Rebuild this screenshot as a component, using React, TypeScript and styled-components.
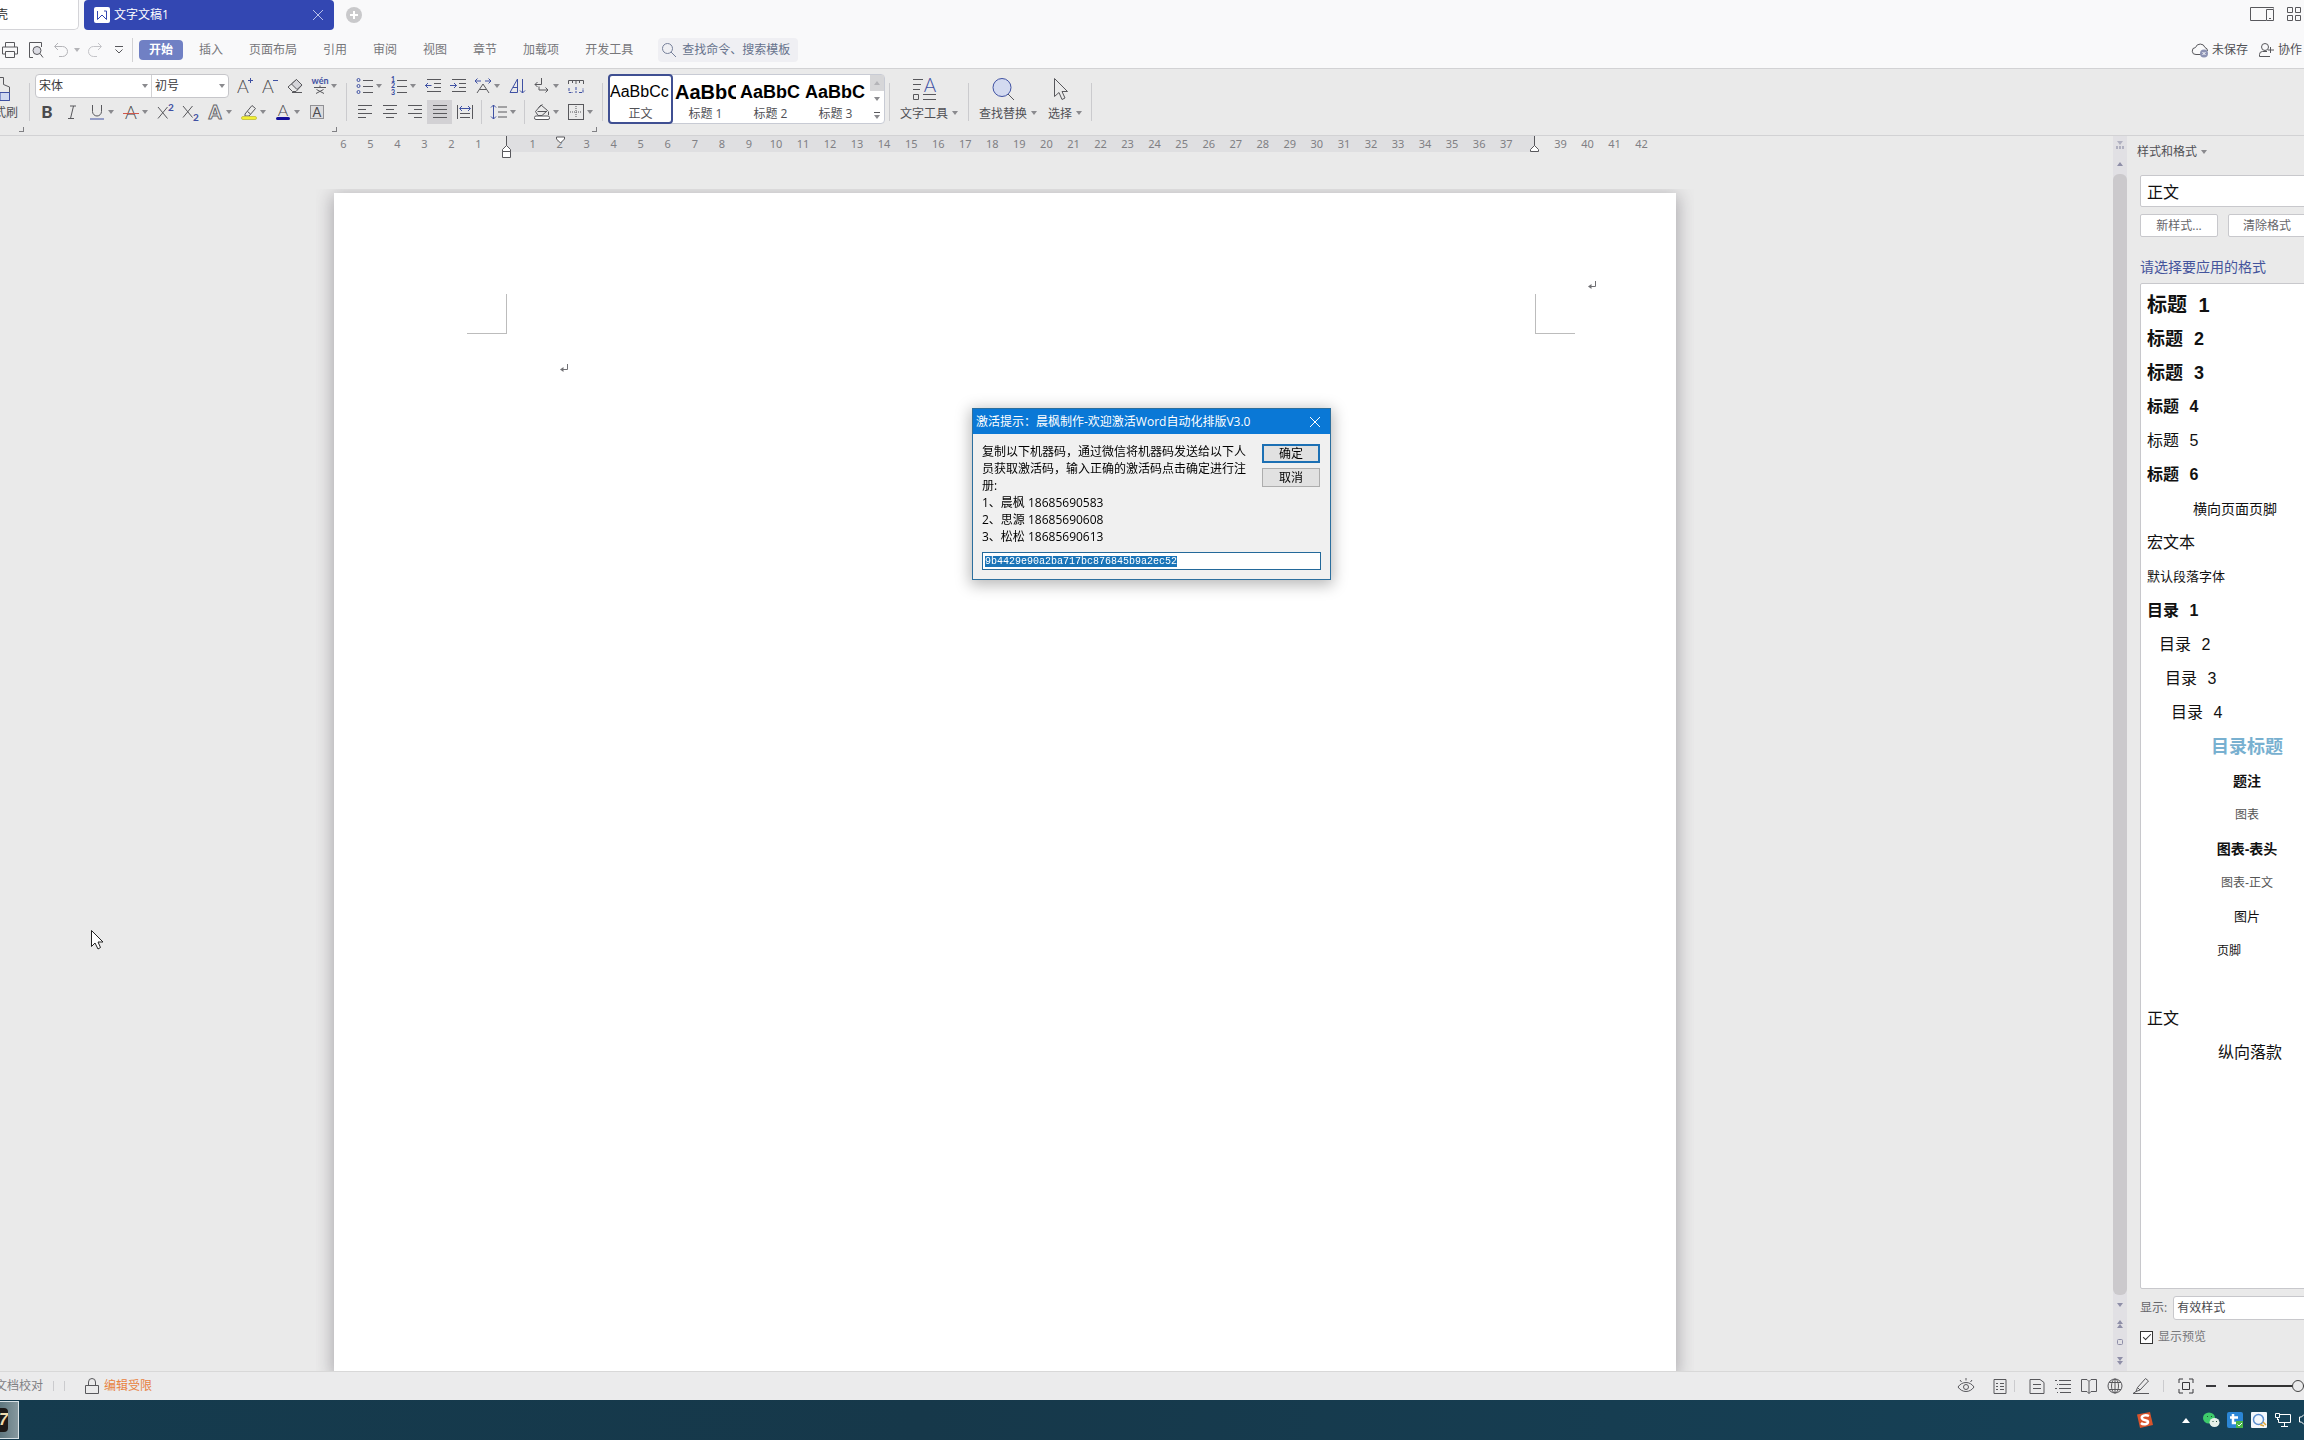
import React, { useEffect, useRef } from "react";
import styled, { createGlobalStyle, css } from "styled-components";

const ui = `"Open Sans", "Noto Sans CJK SC", sans-serif`;
const arial = `"Liberation Sans", "Noto Sans CJK SC", sans-serif`;

const c = {
  chrome: "#f9f9fa",
  surface: "#eaeaea",
  line: "#d2d2d4",
  ink: "#505055",
  muted: "#77777a",
  accent: "#3347b2",
  blue: "#3f51a3",
};

const Global = createGlobalStyle`
  *, *::before, *::after { box-sizing: border-box; }
  html, body { margin: 0; height: 100%; overflow: hidden; }
  #root { height: 100%; }
  body { font: 12px/16px ${ui}; color: ${c.ink}; background: ${c.surface}; }
  button, input, select { font: inherit; color: inherit; margin: 0; }
  button { border: 0; padding: 0; background: none; }
  svg { display: block; flex: none; }
`;

const Shell = styled.div`
  display: flex;
  flex-direction: column;
  height: 100vh;
  overflow: hidden;
  white-space: nowrap;
`;

/* ---------- icons ---------- */

const Svg = styled.svg.attrs<{ $w?: number; $h?: number }>((p) => ({
  width: p.$w ?? 16,
  height: p.$h ?? 16,
  viewBox: `0 0 ${p.$w ?? 16} ${p.$h ?? 16}`,
}))<{ $w?: number; $h?: number; $color?: string; $fill?: string }>`
  fill: ${(p) => p.$fill ?? "none"};
  stroke: ${(p) => p.$color ?? "#58585c"};
  stroke-width: 1;
  overflow: visible;
`;

const Glyph = styled.text<{ $size?: number; $color?: string; $weight?: number; $outline?: boolean }>`
  font-family: Lato, "Liberation Sans", sans-serif;
  font-size: ${(p) => p.$size ?? 17}px;
  font-weight: ${(p) => p.$weight ?? 300};
  fill: ${(p) => (p.$outline ? c.surface : p.$color ?? "#4a4a4e")};
  stroke: ${(p) => (p.$outline ? "#66666a" : "none")};
  text-anchor: middle;
`;

const Caret = ({ color = "#8a8a8e" }: { color?: string }) => (
  <Svg $w={6} $h={4} $fill={color} $color="none">
    <path d="M0 0h6L3 4z" />
  </Svg>
);

/* ---------- title strip ---------- */

const TitleStrip = styled.header`
  display: flex;
  align-items: flex-start;
  height: 31px;
  background: ${c.chrome};
`;

const HomeTab = styled.button`
  width: 79px;
  height: 30px;
  background: #fff;
  border: solid #d4d4d8;
  border-width: 0 1px 1px 0;
  border-radius: 0 0 5px 0;
  text-align: left;
  color: #333;
  overflow: hidden;
`;

const ClippedLabel = styled.span<{ $by: number }>`
  display: block;
  margin-left: -${(p) => p.$by}px;
`;

const DocTab = styled.div`
  display: flex;
  align-items: center;
  width: 250px;
  height: 30px;
  margin-left: 5px;
  padding: 0 11px 0 10px;
  gap: 4px;
  border-radius: 4px;
  background: ${c.accent};
  color: #fff;
`;

const TabName = styled.span`
  flex: 1;
`;

const AddTab = styled.button`
  display: flex;
  margin: 7px 0 0 12px;
`;

const WindowTools = styled.div`
  display: flex;
  gap: 13px;
  margin: 7px 3px 0 auto;
`;

/* ---------- menu bar ---------- */

const MenuBar = styled.nav`
  display: flex;
  align-items: center;
  height: 38px;
  background: ${c.chrome};
  border-bottom: 1px solid ${c.line};
`;

const QuickTools = styled.div`
  display: flex;
  align-items: center;
  width: 133px;
  height: 24px;
  padding-left: 2px;
  border-right: 1px solid ${c.line};
`;

const QuickButton = styled.button<{ $w: number }>`
  display: flex;
  align-items: center;
  gap: 5px;
  width: ${(p) => p.$w}px;
`;

const MenuItem = styled.button<{ $active?: boolean }>`
  height: 20px;
  padding: 0 13px;
  color: ${c.muted};
  ${(p) =>
    p.$active &&
    css`
      margin: 0 3px 0 6px;
      padding: 0 10px;
      border-radius: 4px;
      background: #7080c4;
      color: #fff;
      font-weight: 700;
    `}
`;

const SearchBox = styled.label`
  display: flex;
  align-items: center;
  gap: 6px;
  width: 140px;
  height: 24px;
  margin-left: 12px;
  padding-left: 4px;
  border-radius: 4px;
  background: #efeff3;
`;

const SearchInput = styled.input`
  width: 112px;
  padding: 0;
  border: 0;
  background: none;
  &::placeholder {
    color: #66728c;
    opacity: 1;
  }
`;

const MenuRight = styled.div`
  display: flex;
  gap: 11px;
  margin: 0 2px 0 auto;
`;

const MenuAction = styled.button`
  display: flex;
  align-items: center;
  gap: 4px;
`;

/* ---------- ribbon ---------- */

const Ribbon = styled.section`
  display: flex;
  height: 67px;
  background: ${c.surface};
  border-bottom: 1px solid ${c.line};
`;

const Divider = styled.span<{ $h?: number; $m?: number }>`
  flex: none;
  align-self: center;
  width: 1px;
  height: ${(p) => p.$h ?? 38}px;
  margin: 0 ${(p) => p.$m ?? 0}px;
  background: #cbcbce;
`;

const Group = styled.div<{ $w: number; $pad?: number }>`
  display: flex;
  flex-direction: column;
  width: ${(p) => p.$w}px;
  padding: 4px 0 3px ${(p) => p.$pad ?? 0}px;
`;

const ToolRow = styled.div`
  display: flex;
  align-items: center;
  height: 26px;
`;

const Tool = styled.button<{ $menu?: boolean; $on?: boolean }>`
  display: flex;
  align-items: center;
  flex: none;
  gap: 3px;
  width: ${(p) => (p.$menu ? 34 : 25)}px;
  height: 24px;
  padding-left: 5px;
  background: ${(p) => (p.$on ? "#d2d1d4" : "none")};
`;

const FontBoxes = styled.div`
  display: flex;
  flex: none;
  width: 194px;
  height: 24px;
  margin: 0 3px 0 1px;
  border: 1px solid #c6c6ca;
  border-radius: 4px;
  background: #fff;
`;

const BoxLabel = styled.label<{ $w: number }>`
  display: flex;
  align-items: center;
  width: ${(p) => p.$w}px;
  padding: 0 3px;
  & + & {
    border-left: 1px solid ${c.line};
  }
`;

const PlainSelect = styled.select`
  appearance: none;
  flex: 1;
  min-width: 0;
  padding: 0;
  border: 0;
  background: none;
  color: #3a3a3d;
`;

const Launcher = styled.button`
  align-self: flex-end;
  width: 5px;
  height: 5px;
  margin: 2px 5px 0 0;
  border: solid #808084;
  border-width: 0 1px 1px 0;
`;

const FormatPainter = styled.button`
  display: flex;
  flex-direction: column;
  gap: 4px;
  height: 52px;
  padding-top: 4px;
  text-align: left;
`;

const Gallery = styled.div`
  display: flex;
  align-self: flex-start;
  width: 277px;
  height: 50px;
  margin: 5px 0 0 5px;
  border: 1px solid #c8cbd4;
  border-radius: 4px;
  background: #fff;
`;

const StyleCard = styled.button<{ $on?: boolean }>`
  display: flex;
  flex-direction: column;
  justify-content: space-between;
  align-items: center;
  width: 65px;
  margin: -1px 0 -1px ${(p) => (p.$on ? -1 : 0)}px;
  padding: 5px 0 0;
  overflow: hidden;
  border: 2px solid ${(p) => (p.$on ? "#3f4f92" : "transparent")};
  border-radius: 4px;
`;

const Sample = styled.span<{ $size: number; $bold?: boolean }>`
  align-self: stretch;
  overflow: hidden;
  text-align: left;
  font-family: ${arial};
  font-size: ${(p) => p.$size}px;
  line-height: 22px;
  font-weight: ${(p) => (p.$bold ? 700 : 400)};
  color: #000;
`;

const GalleryScroll = styled.div`
  display: flex;
  flex-direction: column;
  margin-left: auto;
`;

const ScrollButton = styled.button<{ $off?: boolean }>`
  display: flex;
  flex-direction: column;
  align-items: center;
  justify-content: center;
  gap: 2px;
  width: 14px;
  height: 16px;
  background: ${(p) => (p.$off ? "#d6d6d8" : "none")};
`;

const BigTool = styled.button<{ $pad: number }>`
  display: flex;
  align-items: flex-end;
  gap: 4px;
  align-self: flex-start;
  height: 53px;
  padding: 0 ${(p) => p.$pad}px;
`;

const BigFace = styled.span`
  display: flex;
  flex-direction: column;
  align-items: center;
  gap: 6px;
`;

const CaretHolder = styled.span`
  padding-bottom: 7px;
`;

/* ---------- workspace ---------- */

const Body = styled.main`
  display: flex;
  flex: 1;
  min-height: 0;
`;

const Workspace = styled.section`
  display: flex;
  flex-direction: column;
  align-items: center;
  flex: 1;
  min-width: 0;
  padding-right: 103px;
`;

const Ruler = styled.div`
  display: flex;
  width: 1342px;
  height: 16px;
  line-height: 15px;
  font-size: 11px;
  font-family: "Noto Sans", sans-serif;
  color: #808084;
`;

const RulerPart = styled.div<{ $w: number; $band?: boolean; $end?: boolean }>`
  position: relative;
  display: flex;
  justify-content: ${(p) => (p.$end ? "flex-end" : "flex-start")};
  width: ${(p) => p.$w}px;
  padding: 0 15px 0 12px;
  background: ${(p) => (p.$band ? "#dfdfe1" : "none")};
`;

const Tick = styled.span<{ $grow?: boolean }>`
  flex: ${(p) => (p.$grow ? "1 1 0" : "0 0 27px")};
  min-width: 0;
  text-align: center;
`;

const Marker = styled.span<{ $x: string }>`
  position: absolute;
  top: 0;
  left: ${(p) => p.$x};
`;

const Page = styled.article`
  display: flex;
  flex-direction: column;
  flex: 1;
  width: 1342px;
  margin-top: 41px;
  padding-top: 88px;
  background: #fff;
  box-shadow: 0 4px 16px 2px rgba(80, 76, 84, 0.4);
  clip-path: inset(-4px -18px 0 -18px);
`;

const HeaderLine = styled.div`
  display: flex;
  justify-content: flex-end;
  padding-right: 80px;
`;

const Corners = styled.div`
  display: flex;
  justify-content: space-between;
  margin: 5px 101px 30px 133px;
`;

const Corner = styled.span<{ $right?: boolean }>`
  width: 40px;
  height: 40px;
  border: solid #bcbcbc;
  border-width: ${(p) => (p.$right ? "0 0 1px 1px" : "0 1px 1px 0")};
`;

const Paragraph = styled.div`
  padding-left: 226px;
`;

const ScrollTrack = styled.div`
  display: flex;
  flex-direction: column;
  align-items: center;
  width: 14px;
  background: #e1e0e4;
`;

const TrackButton = styled.button<{ $h: number }>`
  display: flex;
  align-items: center;
  justify-content: center;
  width: 14px;
  height: ${(p) => p.$h}px;
`;

const Thumb = styled.div`
  flex: 1;
  width: 14px;
  border-radius: 6px;
  background: #cbc9cc;
`;

/* ---------- style pane ---------- */

const Pane = styled.aside`
  width: 177px;
  overflow: hidden;
`;

const PaneInner = styled.div`
  display: flex;
  flex-direction: column;
  width: 227px;
  height: 100%;
  padding: 8px 0 26px 13px;
`;

const PaneTitle = styled.button`
  display: flex;
  align-items: center;
  gap: 4px;
  height: 16px;
  margin-left: -3px;
`;

const CurrentStyle = styled.input`
  width: 100%;
  height: 32px;
  margin-top: 15px;
  padding: 0 6px;
  border: 1px solid #c8c8cc;
  border-radius: 2px;
  background: #fff;
  color: #111;
  font-size: 16px;
`;

const PaneButtons = styled.div`
  display: flex;
  gap: 10px;
  margin-top: 7px;
`;

const PaneButton = styled.button`
  width: 78px;
  height: 23px;
  border: 1px solid #c8c8cc;
  border-radius: 2px;
  background: #fff;
  color: #66666a;
`;

const Prompt = styled.p`
  margin: 20px 0 6px;
  font-size: 14px;
  line-height: 20px;
  color: #44549c;
`;

const StyleList = styled.ul`
  flex: 1;
  min-height: 0;
  margin: 0;
  padding: 4px 6px;
  list-style: none;
  border: 1px solid #c8c8cc;
  border-radius: 2px;
  background: #fff;
`;

const StyleRow = styled.li<{ $size: number; $bold?: boolean; $color?: string; $indent?: number; $center?: boolean }>`
  height: 34px;
  line-height: 34px;
  padding-left: ${(p) => p.$indent ?? 0}px;
  text-align: ${(p) => (p.$center ? "center" : "left")};
  font-family: ${arial};
  font-size: ${(p) => p.$size}px;
  font-weight: ${(p) => (p.$bold ? 700 : 400)};
  color: ${(p) => p.$color ?? "#111"};
`;

const Level = styled.span`
  margin-left: 6px;
`;

const ShowRow = styled.div`
  display: flex;
  align-items: center;
  gap: 6px;
  margin-top: 7px;
  color: #66666a;
`;

const ShowSelect = styled.select`
  appearance: none;
  flex: 1;
  height: 24px;
  padding: 0 3px;
  border: 1px solid #c8c8cc;
  border-radius: 3px;
  background: #fff;
  color: #4a4a4e;
`;

const PreviewRow = styled.label`
  display: flex;
  align-items: center;
  gap: 5px;
  margin-top: 9px;
  color: #77777a;
`;

const Check = styled.input`
  appearance: none;
  display: grid;
  place-items: center;
  width: 13px;
  height: 13px;
  border: 1px solid #333;
  background: #fff;
  &:checked::before {
    content: "";
    width: 8px;
    height: 4px;
    margin-bottom: 3px;
    border: solid #333;
    border-width: 0 0 1px 1px;
    transform: rotate(-45deg);
  }
`;

/* ---------- status bar and taskbar ---------- */

const StatusBar = styled.footer`
  display: flex;
  align-items: center;
  height: 29px;
  border-top: 1px solid #d8d8d8;
  background: #ebebec;
  color: #808084;
`;

const Proofing = styled.button`
  margin: 0 10px 0 -5px;
`;

const Restricted = styled.button`
  display: flex;
  align-items: center;
  gap: 5px;
  margin-left: 10px;
  color: #e8823f;
`;

const ViewTools = styled.div`
  display: flex;
  align-items: center;
  gap: 10px;
  margin-left: auto;
`;

const IconButton = styled.button`
  display: flex;
`;

const ToolCluster = styled.span<{ $gap: number; $left?: number }>`
  display: flex;
  align-items: center;
  gap: ${(p) => p.$gap}px;
  padding-left: ${(p) => p.$left ?? 0}px;
`;

const ZoomSlider = styled.input`
  appearance: none;
  width: 76px;
  height: 14px;
  margin: 0;
  background: linear-gradient(#333, #333) center / 100% 2px no-repeat;
  &::-webkit-slider-thumb {
    appearance: none;
    width: 12px;
    height: 12px;
    border: 1px solid #444;
    border-radius: 50%;
    background: #ebebec;
  }
`;

const Taskbar = styled.footer`
  display: flex;
  align-items: center;
  height: 40px;
  background: linear-gradient(90deg, #153b4e, #16384a 40%, #164258);
`;

const TaskButton = styled.button`
  display: flex;
  align-items: center;
  width: 19px;
  height: 38px;
  border: 1px solid #d8e2e6;
  border-left: 0;
  background: linear-gradient(90deg, #5e777f, #86989e);
`;

const TaskIcon = styled.span`
  width: 8px;
  height: 24px;
  border-radius: 0 4px 4px 0;
  background: #1d1a18;
  color: #f0dcae;
  font: italic 700 16px/24px ${arial};
  direction: rtl;
  overflow: hidden;
`;

const Tray = styled.div`
  display: flex;
  align-items: center;
  gap: 8px;
  margin-left: auto;
`;

/* ---------- dialog ---------- */

const DialogLayer = styled.div`
  position: fixed;
  inset: 0;
  display: grid;
  justify-content: center;
  align-content: start;
  padding: 408px 1px 0 0;
`;

const DialogBox = styled.form`
  width: 359px;
  border: 1px solid #2c6f9e;
  background: #f0f0f0;
  box-shadow: 0 3px 14px 2px rgba(0, 0, 0, 0.28);
  color: #000;
`;

const DialogTitle = styled.div`
  display: flex;
  align-items: center;
  justify-content: space-between;
  height: 25px;
  padding: 0 10px 0 3px;
  background: #0a78d6;
  color: #fff;
`;

const DialogMain = styled.div`
  display: flex;
  justify-content: space-between;
  padding: 9px 10px 0 9px;
`;

const Message = styled.label`
  width: 266px;
  line-height: 17px;
  white-space: pre-line;
`;

const DialogButtons = styled.div`
  display: flex;
  flex-direction: column;
  gap: 5px;
  padding-top: 1px;
`;

const DialogButton = styled.button<{ $primary?: boolean }>`
  width: 58px;
  height: 19px;
  line-height: 14px;
  border: ${(p) => (p.$primary ? "2px solid #1c70b4" : "1px solid #adadad")};
  background: #e1e1e1;
`;

const CodeInput = styled.input`
  display: block;
  width: 339px;
  height: 18px;
  margin: 7px 0 9px 9px;
  padding: 0 2px;
  border: 1px solid #24699a;
  outline: 0;
  background: #fff;
  color: #000;
  font: 10px/14px "Liberation Mono", monospace;
  &::selection {
    background: #1a74b8;
    color: #fff;
  }
`;

const Pointer = styled.span`
  position: absolute;
  left: 91px;
  top: 930px;
`;

/* ---------- data ---------- */

const menus = ["插入", "页面布局", "引用", "审阅", "视图", "章节", "加载项", "开发工具"];

const cards = [
  { name: "正文", text: "AaBbCc", size: 16, bold: false },
  { name: "标题 1", text: "AaBbC", size: 20, bold: true },
  { name: "标题 2", text: "AaBbC", size: 18, bold: true },
  { name: "标题 3", text: "AaBbC", size: 18, bold: true },
];

type Entry = { name: string; level?: string; size: number; bold?: boolean; color?: string; indent?: number; center?: boolean };

const styleEntries: Entry[] = [
  { name: "标题", level: "1", size: 20, bold: true },
  { name: "标题", level: "2", size: 18, bold: true },
  { name: "标题", level: "3", size: 18, bold: true },
  { name: "标题", level: "4", size: 16, bold: true },
  { name: "标题", level: "5", size: 16 },
  { name: "标题", level: "6", size: 16, bold: true },
  { name: "横向页面页脚", size: 14, indent: 46 },
  { name: "宏文本", size: 16 },
  { name: "默认段落字体", size: 13 },
  { name: "目录", level: "1", size: 16, bold: true },
  { name: "目录", level: "2", size: 16, indent: 12 },
  { name: "目录", level: "3", size: 16, indent: 18 },
  { name: "目录", level: "4", size: 16, indent: 24 },
  { name: "目录标题", size: 18, bold: true, color: "#78b0d0", center: true },
  { name: "题注", size: 14, bold: true, center: true },
  { name: "图表", size: 12, color: "#555", center: true },
  { name: "图表-表头", size: 14, bold: true, center: true },
  { name: "图表-正文", size: 12, color: "#555", center: true },
  { name: "图片", size: 13, center: true },
  { name: "页脚", size: 12, indent: 70 },
  { name: "", size: 12 },
  { name: "正文", size: 16 },
  { name: "纵向落款", size: 16, indent: 71 },
];

const range = (from: number, to: number) => Array.from({ length: to - from + 1 }, (_, i) => from + i);

/* ---------- small drawings ---------- */

const ReturnMark = () => (
  <Svg $w={8} $h={8} $color="#707074">
    <path d="M7.500 0v5.500H2" />
    <path d="M3.500 3 0 5.500 3.500 8z" fill="#707074" stroke="none" />
  </Svg>
);

const AlignIcon = ({ mode }: { mode: "l" | "c" | "r" | "j" }) => {
  const full = "M1 1.500h14M1 9.500h14";
  const short = { l: "M1 5.500h8M1 13.500h8", c: "M4 5.500h8M4 13.500h8", r: "M7 5.500h8M7 13.500h8", j: "M1 5.500h14M1 13.500h14" }[mode];
  return (
    <Svg>
      <path d={full + short} />
    </Svg>
  );
};

const FontTools = () => (
  <Group $w={312} $pad={4}>
    <ToolRow>
      <FontBoxes>
        <BoxLabel $w={115}>
          <PlainSelect aria-label="字体" defaultValue="宋体"><option>宋体</option></PlainSelect>
          <Caret />
        </BoxLabel>
        <BoxLabel $w={77}>
          <PlainSelect aria-label="字号" defaultValue="初号"><option>初号</option></PlainSelect>
          <Caret />
        </BoxLabel>
      </FontBoxes>
      <Tool aria-label="增大字号">
        <Svg><Glyph x="6" y="15" $size={18}>A</Glyph><path d="M11 2.500h5M13.500 0v5" stroke={c.blue} /></Svg>
      </Tool>
      <Tool aria-label="减小字号">
        <Svg><Glyph x="6" y="15" $size={18}>A</Glyph><path d="M11 2.500h5" stroke={c.blue} /></Svg>
      </Tool>
      <Tool aria-label="清除格式">
        <Svg><path d="M9.500 1.500 15 7l-6 6.500H5.500L1 9z" /><path d="M4.500 6 10 11.500 15 7 9.500 1.500z" fill="#d5d5d9" /><path d="M5 14.500h10" /></Svg>
      </Tool>
      <Tool aria-label="拼音指南" $menu>
        <Svg>
          <Glyph x="8" y="6" $size={9} $weight={700} $color={c.blue}>wén</Glyph>
          <path d="M2 9.500h12M8 7.500v2M4.500 11.500 12 15.500M11.500 11.500 4 15.500" />
        </Svg>
        <Caret />
      </Tool>
    </ToolRow>
    <ToolRow>
      <Tool aria-label="加粗"><Svg><Glyph x="8" y="14" $size={17} $weight={900}>B</Glyph></Svg></Tool>
      <Tool aria-label="倾斜"><Svg><path d="M6 2h6M4 14.500h6M9.500 2 6.500 14.500" /></Svg></Tool>
      <Tool aria-label="下划线" $menu>
        <Svg><path d="M3.500 1v6.500a4.500 4.500 0 0 0 9 0V1" /><path d="M1 15h14" stroke={c.blue} /></Svg><Caret />
      </Tool>
      <Tool aria-label="删除线" $menu>
        <Svg><Glyph x="8" y="15" $size={18}>A</Glyph><path d="M0 9.500h16" stroke="#d0584c" /></Svg><Caret />
      </Tool>
      <Tool aria-label="上标">
        <Svg><path d="M1 3 10.500 14.500M10.500 3 1 14.500" /><Glyph x="14" y="7" $size={10} $weight={700} $color={c.blue}>2</Glyph></Svg>
      </Tool>
      <Tool aria-label="下标">
        <Svg><path d="M1 2 10.500 13.500M10.500 2 1 13.500" /><Glyph x="14" y="17" $size={10} $weight={700} $color={c.blue}>2</Glyph></Svg>
      </Tool>
      <Tool aria-label="文字效果" $menu>
        <Svg><Glyph x="8" y="15" $size={18} $weight={900} $outline>A</Glyph></Svg><Caret />
      </Tool>
      <Tool aria-label="突出显示" $menu>
        <Svg><path d="M4 10 11 1.500l3.500 3L8 12H4zM6.500 7.500 9.500 10" /><rect x="0.500" y="12.500" width="15" height="3" rx="1.500" fill="#f3f032" stroke="#c9c64a" /></Svg><Caret />
      </Tool>
      <Tool aria-label="字体颜色" $menu>
        <Svg><Glyph x="8" y="12" $size={16}>A</Glyph><rect x="1" y="13" width="14" height="3" rx="1.500" fill="#13109a" stroke="none" /></Svg><Caret />
      </Tool>
      <Tool aria-label="字符底纹">
        <Svg><rect x="1.500" y="1.500" width="13" height="13" fill="#dcdcde" stroke="#909094" /><Glyph x="8" y="13" $size={13} $weight={400}>A</Glyph></Svg>
      </Tool>
    </ToolRow>
    <Launcher aria-label="字体设置" />
  </Group>
);

const ParagraphTools = () => (
  <Group $w={251} $pad={1}>
    <ToolRow>
      <Tool aria-label="项目符号" $menu>
        <Svg><path d="M6 2.500h10M6 8.500h10M6 14.500h10" /><g stroke={c.blue}><circle cx="1.500" cy="2" r="1.500" /><circle cx="1.500" cy="8" r="1.500" /><circle cx="1.500" cy="14" r="1.500" /></g></Svg><Caret />
      </Tool>
      <Tool aria-label="编号" $menu>
        <Svg>
          <path d="M6 2.500h10M6 8.500h10M6 14.500h10" />
          <Glyph x="2" y="4" $size={7} $weight={900} $color={c.blue}>1</Glyph>
          <Glyph x="2" y="10" $size={7} $weight={900} $color={c.blue}>2</Glyph>
          <Glyph x="2" y="17" $size={7} $weight={900} $color={c.blue}>3</Glyph>
        </Svg><Caret />
      </Tool>
      <Tool aria-label="减少缩进"><Svg><path d="M2 1.500h14M9 5.500h7M9 9.500h7M2 13.500h14" /><path d="M6.500 7.500H0M3 5 0.500 7.500 3 10" stroke={c.blue} /></Svg></Tool>
      <Tool aria-label="增加缩进"><Svg><path d="M2 1.500h14M9 5.500h7M9 9.500h7M2 13.500h14" /><path d="M0 7.500h6.500M4 5 6.500 7.500 4 10" stroke={c.blue} /></Svg></Tool>
      <Tool aria-label="中文版式" $menu>
        <Svg><path d="M2 15 8 6l6 9M4.500 11.500h7" /><path d="M6 3H0M2.500.5 0 3l2.500 2.500M10 3h6M13.500.5 16 3l-2.500 2.500" stroke={c.blue} /></Svg><Caret />
      </Tool>
      <Tool aria-label="排序"><Svg $color={c.blue}><path d="M1 14.500 8.500 1v13.500zM4 9.500h4.500M13.500 1v14M11 12.500l2.500 2.500 2.500-2.500" /></Svg></Tool>
      <Tool aria-label="换行" $menu><Svg><path d="M7.500 0v6.500H1M3.500 4 1 6.500 3.500 9M5 8.500v3.500h9M11.500 9.500 14 12l-2.500 2.500" /></Svg><Caret /></Tool>
      <Tool aria-label="制表位"><Svg><path d="M.5 6V2.500h15V6M4.500 3v2M8 3v3M11.500 3v2" /><path d="M1 10v4.500h4M11 14.500h4V10M8 9v6" stroke={c.blue} strokeDasharray="3 1" /></Svg></Tool>
    </ToolRow>
    <ToolRow>
      <Tool aria-label="左对齐"><AlignIcon mode="l" /></Tool>
      <Tool aria-label="居中"><AlignIcon mode="c" /></Tool>
      <Tool aria-label="右对齐"><AlignIcon mode="r" /></Tool>
      <Tool aria-label="两端对齐" $on><AlignIcon mode="j" /></Tool>
      <Tool aria-label="分散对齐"><Svg><path d="M.5 1v14M15.500 1v14M3 9.500h10M3 13.500h10" /><path d="M3 4.500h10M5 2 2.500 4.500 5 7M11 2l2.500 2.500L11 7" stroke={c.blue} /></Svg></Tool>
      <Divider $h={24} $m={4} />
      <Tool aria-label="行距" $menu><Svg><path d="M7 3h9M7 8h9M7 13h9" /><path d="M2.500 1v14M0 3.500 2.500 1 5 3.500M0 12.500 2.500 15 5 12.500" stroke={c.blue} /></Svg><Caret /></Tool>
      <Divider $h={24} $m={4} />
      <Tool aria-label="底纹" $menu><Svg><path d="M7 1 13.500 6.500 8 11.500H4L1.500 7.500zM3.500 7.500h9.500M4.500 3.500l4-3" /><path d="M14.500 7.500v3.500" /><rect x=".5" y="12" width="15" height="3.500" rx="1.500" fill="#fff" /></Svg><Caret /></Tool>
      <Tool aria-label="边框" $menu><Svg><rect x=".5" y=".5" width="15" height="15" /><path d="M8 2v12M2 8h12" strokeDasharray="1 1" /></Svg><Caret /></Tool>
    </ToolRow>
    <Launcher aria-label="段落设置" />
  </Group>
);

const StylePane = () => (
  <Pane>
    <PaneInner>
      <PaneTitle>样式和格式 <Caret /></PaneTitle>
      <CurrentStyle aria-label="当前样式" defaultValue="正文" />
      <PaneButtons>
        <PaneButton>新样式...</PaneButton>
        <PaneButton>清除格式</PaneButton>
      </PaneButtons>
      <Prompt>请选择要应用的格式</Prompt>
      <StyleList>
        {styleEntries.map((e, i) => (
          <StyleRow key={i} $size={e.size} $bold={e.bold} $color={e.color} $indent={e.indent} $center={e.center}>
            {e.name}
            {e.level && <> <Level>{e.level}</Level></>}
          </StyleRow>
        ))}
      </StyleList>
      <ShowRow>
        <label htmlFor="show">显示:</label>
        <ShowSelect id="show" defaultValue="有效样式"><option>有效样式</option></ShowSelect>
      </ShowRow>
      <PreviewRow>
        <Check type="checkbox" defaultChecked />
        显示预览
      </PreviewRow>
    </PaneInner>
  </Pane>
);

const ActivationDialog = () => {
  const code = useRef<HTMLInputElement>(null);
  useEffect(() => {
    code.current?.focus();
    code.current?.select();
  }, []);
  return (
    <DialogLayer>
      <DialogBox role="dialog" aria-label="激活提示" onSubmit={(e) => e.preventDefault()}>
        <DialogTitle>
          <span>激活提示：晨枫制作-欢迎激活Word自动化排版V3.0</span>
          <IconButton type="button" aria-label="关闭">
            <Svg $w={10} $h={10} $color="#fff"><path d="M0 0l10 10M10 0 0 10" /></Svg>
          </IconButton>
        </DialogTitle>
        <DialogMain>
          <Message htmlFor="code">
            {"复制以下机器码，通过微信将机器码发送给以下人\n员获取激活码，输入正确的激活码点击确定进行注\n册:\n1、晨枫 18685690583\n2、思源 18685690608\n3、松松 18685690613"}
          </Message>
          <DialogButtons>
            <DialogButton $primary>确定</DialogButton>
            <DialogButton type="button">取消</DialogButton>
          </DialogButtons>
        </DialogMain>
        <CodeInput id="code" ref={code} spellCheck={false} defaultValue="9b4429e90a2ba717bc876845b9a2ec52" />
      </DialogBox>
    </DialogLayer>
  );
};

export default function App() {
  return (
    <Shell>
      <Global />
      <TitleStrip>
        <HomeTab><ClippedLabel $by={16}>稻壳</ClippedLabel></HomeTab>
        <DocTab>
          <Svg $color="none"><rect width="16" height="16" rx="2" fill="#fff" /><path d="M3.500 4v8.500L8 8l4.500 4.500V4H10" stroke={c.accent} /></Svg>
          <TabName>文字文稿1</TabName>
          <IconButton aria-label="关闭文稿"><Svg $w={10} $h={10} $color="#b9c1ea"><path d="M0 0l10 10M10 0 0 10" /></Svg></IconButton>
        </DocTab>
        <AddTab aria-label="新建">
          <Svg $color="#fff"><circle cx="8" cy="8" r="8" fill="#c9c9cb" stroke="none" /><path d="M8 4v8M4 8h8" strokeWidth="2" /></Svg>
        </AddTab>
        <WindowTools>
          <Svg $w={24} $h={14}><path d="M16 13.500H.5V.5h23v1" /><path d="M16.500 2.500v11h7v-11zM19 11.500h2" /></Svg>
          <Svg $w={14} $h={14}><path d="M.5.5h5v5h-5zM8.500.5h5v5h-5zM.5 8.500h5v5h-5zM8.500 8.500h5v5h-5z" /></Svg>
        </WindowTools>
      </TitleStrip>

      <MenuBar>
        <QuickTools>
          <QuickButton $w={26} aria-label="打印"><Svg><path d="M3.500 5V.5h9V5M3.500 12H.5V5h15v7h-3" /><path d="M3.500 9.500h9v6h-9z" /></Svg></QuickButton>
          <QuickButton $w={25} aria-label="打印预览"><Svg><path d="M5 15.500H1.500V.5h12V5" /><circle cx="9" cy="8.500" r="4" fill="#dcdce4" /><path d="M12 11.500l3 4" /></Svg></QuickButton>
          <QuickButton $w={34} aria-label="撤销"><Svg $color="#b4b4b8"><path d="M5 1 1.500 4.500 5 8M2 4.500h7.500a4.500 4.500 0 0 1 0 10H6" /></Svg><Caret color="#b4b4b8" /></QuickButton>
          <QuickButton $w={28} aria-label="恢复"><Svg $color="#c4c4c8"><path d="M11 1l3.500 3.500L11 8M14 4.500H6.500a4.500 4.500 0 0 0 0 10H10" /></Svg></QuickButton>
          <QuickButton $w={10} aria-label="更多"><Svg $w={8} $h={8}><path d="M0 .5h8M.5 3.500 4 7 7.500 3.500" /></Svg></QuickButton>
        </QuickTools>
        <MenuItem $active>开始</MenuItem>
        {menus.map((m) => <MenuItem key={m}>{m}</MenuItem>)}
        <SearchBox>
          <Svg $w={14} $h={14} $color="#76809a"><circle cx="5.500" cy="5.500" r="5" /><path d="M9 9l5 5" /></Svg>
          <SearchInput aria-label="搜索" placeholder="查找命令、搜索模板" />
        </SearchBox>
        <MenuRight>
          <MenuAction>
            <Svg><path d="M9 12.500H4a3.500 3.500 0 0 1-.5-7 5 5 0 0 1 9.500 0A3.500 3.500 0 0 1 15.500 9" /><circle cx="12" cy="11.500" r="4" fill="#8d93b4" stroke="none" /><path d="M10.500 10l3 3M13.500 10l-3 3" stroke="#fff" /></Svg>
            未保存
          </MenuAction>
          <MenuAction>
            <Svg $w={15}><circle cx="6" cy="5" r="3.500" /><path d="M11 14.500H.5v-2a3 3 0 0 1 3-3H8M11.500 5v6M9 8h6" /></Svg>
            协作
          </MenuAction>
        </MenuRight>
      </MenuBar>

      <Ribbon>
        <Group $w={29}>
          <FormatPainter>
            <Svg $w={10} $h={24}><path d="M0 .5h3.500v7L9.500 10v13.500H0" /><path d="M0 15.500h9.500v8H0z" fill="#cfd8f0" stroke={c.blue} /></Svg>
            <ClippedLabel $by={18}>格式刷</ClippedLabel>
          </FormatPainter>
          <Launcher aria-label="剪贴板" />
        </Group>
        <Divider />
        <FontTools />
        <Divider $m={4} />
        <ParagraphTools />
        <Divider />
        <Gallery>
          {cards.map((s, i) => (
            <StyleCard key={s.name} $on={i === 0}>
              <Sample $size={s.size} $bold={s.bold}>{s.text}</Sample>
              <span>{s.name}</span>
            </StyleCard>
          ))}
          <GalleryScroll>
            <ScrollButton $off aria-label="上一行"><Svg $w={6} $h={4} $color="none"><path d="M0 4h6L3 0z" fill="#b4b4b8" /></Svg></ScrollButton>
            <ScrollButton aria-label="下一行"><Caret /></ScrollButton>
            <ScrollButton aria-label="更多样式"><Svg $w={6} $h={1}><path d="M0 .5h6" /></Svg><Caret /></ScrollButton>
          </GalleryScroll>
        </Gallery>
        <Divider $m={4} />
        <BigTool $pad={6}>
          <BigFace>
            <Svg $w={24} $h={22}><path d="M1 1.500h10M1 6.500h8M1 11.500h7M1.500 16.500h5v5h-5zM11 16.500h13M11 21.500h13" /><Glyph x="18" y="14" $size={19} $color={c.blue}>A</Glyph></Svg>
            文字工具
          </BigFace>
          <CaretHolder><Caret /></CaretHolder>
        </BigTool>
        <Divider $m={4} />
        <BigTool $pad={6}>
          <BigFace>
            <Svg $w={24} $h={22}><path d="M17 16l6 6" /><circle cx="11" cy="9.500" r="9" fill="#d3daf0" stroke={c.blue} /></Svg>
            查找替换
          </BigFace>
          <CaretHolder><Caret /></CaretHolder>
        </BigTool>
        <BigTool $pad={5}>
          <BigFace>
            <Svg $w={16} $h={22}><path d="M2.500.5v18l4.500-4 3 7 3-1.500-3-6.500h5.500z" /></Svg>
            选择
          </BigFace>
          <CaretHolder><Caret /></CaretHolder>
        </BigTool>
        <Divider $m={4} />
      </Ribbon>

      <Body>
        <Workspace>
          <Ruler>
            <RulerPart $w={173} $end>{range(1, 6).reverse().map((n) => <Tick key={n}>{n}</Tick>)}</RulerPart>
            <RulerPart $w={1028} $band>
              {range(1, 37).map((n) => <Tick key={n} $grow>{n}</Tick>)}
              <Marker $x="-5px"><Svg $w={9} $h={22}><path d="M4.500 0v10" /><path d="M.5 15.500v-2L4.500 9.500l4 4v2zM.5 15.500h8v6h-8z" fill="#fff" /></Svg></Marker>
              <Marker $x="49px"><Svg $w={9} $h={8}><path d="M.5 1h8v2L4.500 7 .5 3z" fill="#fff" /></Svg></Marker>
              <Marker $x="calc(100% - 5px)"><Svg $w={9} $h={16}><path d="M4.500 0v10" /><path d="M.5 15.500v-2L4.500 9.500l4 4v2z" fill="#fff" /></Svg></Marker>
            </RulerPart>
            <RulerPart $w={141}>{range(39, 42).map((n) => <Tick key={n}>{n}</Tick>)}</RulerPart>
          </Ruler>
          <Page>
            <HeaderLine><ReturnMark /></HeaderLine>
            <Corners><Corner /><Corner $right /></Corners>
            <Paragraph><ReturnMark /></Paragraph>
          </Page>
        </Workspace>
        <ScrollTrack>
          <TrackButton $h={18} aria-label="标尺"><Svg $w={8} $h={8} $color="none"><path d="M1 0h6L4 4zM0 5h2v3H0zM3 5h2v3H3zM6 5h2v3H6z" fill="#b0b0c0" /></Svg></TrackButton>
          <TrackButton $h={20} aria-label="向上"><Svg $w={6} $h={4} $color="none"><path d="M0 4h6L3 0z" fill="#8f8fa8" /></Svg></TrackButton>
          <Thumb />
          <TrackButton $h={20} aria-label="向下"><Caret color="#8f8fa8" /></TrackButton>
          <TrackButton $h={17} aria-label="上一页"><Svg $w={6} $h={8} $color="none"><path d="M0 4h6L3 0zM0 8h6L3 4z" fill="#8f8fa8" /></Svg></TrackButton>
          <TrackButton $h={19} aria-label="浏览对象"><Svg $w={6} $h={6} $color="#8f8fa8"><rect x=".5" y=".5" width="5" height="5" rx="1" /></Svg></TrackButton>
          <TrackButton $h={20} aria-label="下一页"><Svg $w={6} $h={8} $color="none"><path d="M0 0h6L3 4zM0 4h6L3 8z" fill="#8f8fa8" /></Svg></TrackButton>
        </ScrollTrack>
        <StylePane />
      </Body>

      <StatusBar>
        <Proofing>文档校对</Proofing>
        <Divider $h={10} />
        <Divider $h={10} $m={10} />
        <Restricted>
          <Svg $w={14}><path d="M.5 7.500h13v8H.5zM3.500 7.500V4a3.500 3.500 0 0 1 7 0v3.500" /></Svg>
          编辑受限
        </Restricted>
        <ViewTools>
          <ToolCluster $gap={18}>
            <IconButton aria-label="护眼模式"><Svg><path d="M0 9c4-6 12-6 16 0-4 6-12 6-16 0zM8 0v2.500M2 2l1.500 2M14 2l-1.500 2" /><circle cx="8" cy="9" r="2.500" /></Svg></IconButton>
            <IconButton aria-label="阅读"><Svg><path d="M2 1.500h12v14H2zM4 5.500h2M8 5.500h4M4 8.500h2M8 8.500h4M4 11.500h2M8 11.500h4" /></Svg></IconButton>
          </ToolCluster>
          <Divider $h={12} $m={-4} />
          <ToolCluster $gap={10} $left={8}>
            <IconButton aria-label="页面视图"><Svg><path d="M1 1.500h10l4 3v11H1zM4 6.500h8M4 10.500h8" /></Svg></IconButton>
            <IconButton aria-label="大纲"><Svg><path d="M0 2.500h2M4 2.500h12M4 6.500h12M0 10.500h2M2 6.500h1M4 10.500h12M2 14.500h1M5 14.500h11" /></Svg></IconButton>
            <IconButton aria-label="阅读版式"><Svg><path d="M.5 1.500H6l2 2 2-2h5.500v12H10l-2 2-2-2H.5zM8 3.500v12" /></Svg></IconButton>
            <IconButton aria-label="Web 版式"><Svg><circle cx="8" cy="8" r="7" /><ellipse cx="8" cy="8" rx="3.500" ry="7" /><path d="M2 4.500h12M2 11.500h12M8 1v14" /></Svg></IconButton>
            <IconButton aria-label="写作模式"><Svg><path d="M12.500.5 15.500 3 7 12 3 13.500 4.500 9.500zM4.500 9.500 7 12M3 13.500 0 15.500h16" /></Svg></IconButton>
          </ToolCluster>
          <Divider $h={12} $m={4} />
          <ToolCluster $gap={12}>
            <IconButton aria-label="最佳缩放"><Svg $color="#38383c"><path d="M1 5V1h4M11 1h4v4M15 11v4h-4M5 15H1v-4M4.500 4.500h7v7h-7z" /></Svg></IconButton>
            <IconButton aria-label="缩小"><Svg $w={10} $h={2} $color="#38383c"><path d="M0 1h10" strokeWidth="2" /></Svg></IconButton>
            <ZoomSlider type="range" aria-label="显示比例" defaultValue={100} />
          </ToolCluster>
        </ViewTools>
      </StatusBar>

      <Taskbar>
        <TaskButton aria-label="任务"><TaskIcon>7</TaskIcon></TaskButton>
        <Tray>
          <IconButton aria-label="搜狗输入法">
            <Svg><path d="M0 2.500 13 0l3 13L3 16z" fill="#d9542c" stroke="none" /><path d="M12 4C8 2 4 4 5 6.500s6 1 6 3.500-5 3-7 1" stroke="#fff" strokeWidth="2.500" /></Svg>
          </IconButton>
          <ToolCluster $gap={0} $left={21}>
            <IconButton aria-label="显示隐藏图标"><Svg $w={8} $h={5} $color="none"><path d="M0 5h8L4 0z" fill="#fff" /></Svg></IconButton>
          </ToolCluster>
          <ToolCluster $gap={8} $left={5}>
            <Svg $color="none"><ellipse cx="6" cy="6" rx="6" ry="5.500" fill="#3ecb6b" /><ellipse cx="11.500" cy="10.500" rx="5" ry="4.500" fill="#e6efe8" /><path d="M4 4h1v1H4zM8 4h1v1H8zM9.500 9h1v1h-1zM13 9h1v1h-1z" fill="#24513a" /></Svg>
            <Svg $color="none"><rect width="16" height="16" rx="2" fill="#2b86d6" /><path d="M6 2v9h5M3 5.500h8" stroke="#fff" strokeWidth="2.500" /><rect x="9" y="9" width="7" height="7" fill="#49b649" /><path d="M10.500 12.500l1.500 1.500 3-3" stroke="#fff" /></Svg>
            <Svg $color="none"><rect width="16" height="16" rx="1" fill="#f4f8fc" /><circle cx="7.500" cy="7.500" r="5" stroke="#5b8fd0" strokeWidth="1.500" /><path d="M9 12.500 13 14M12 10l3 3" stroke="#e0a63c" strokeWidth="1.500" /></Svg>
            <Svg $color="#fff"><path d="M5 2.500h10.500v8H3.500V7M9.500 10.500v4M6 14.500h7M.5 1.500h4v4h-4zM2.500 5.500V8" /></Svg>
            <Svg $w={5} $color="#fff"><path d="M5 2.500 2.500 5H.5v5h2L5 12.500" /></Svg>
          </ToolCluster>
        </Tray>
      </Taskbar>

      <Pointer>
        <Svg $w={12} $h={20} $color="#222"><path d="M.5.5v16l3.500-3.500 3 6 2.500-1.500-2.500-5.500h5z" fill="#fff" /></Svg>
      </Pointer>
      <ActivationDialog />
    </Shell>
  );
}
